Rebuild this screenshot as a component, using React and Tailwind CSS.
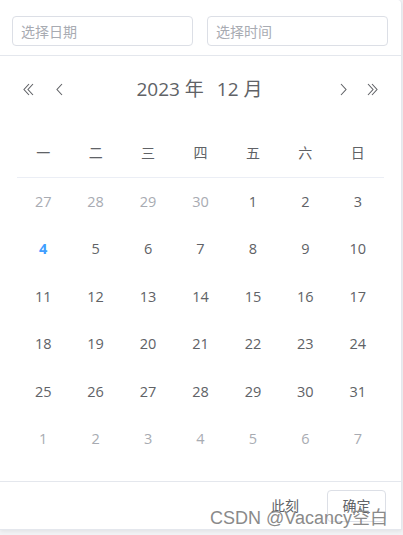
import React from "react";

const weekDays = ["一", "二", "三", "四", "五", "六", "日"];

// december 2023, monday first
const rows = [
  [27, 28, 29, 30, 1, 2, 3],
  [4, 5, 6, 7, 8, 9, 10],
  [11, 12, 13, 14, 15, 16, 17],
  [18, 19, 20, 21, 22, 23, 24],
  [25, 26, 27, 28, 29, 30, 31],
  [1, 2, 3, 4, 5, 6, 7],
];

const Chevron = ({ dir = "left", double = false }) => {
  const pts = dir === "left" ? "6,1 1,6.5 6,12" : "1,1 6,6.5 1,12";
  return (
    <svg width={double ? 11 : 7} height="13" viewBox={double ? "0 0 11 13" : "0 0 7 13"} fill="none">
      <polyline points={pts} stroke="#606266" strokeWidth="1.1" />
      {double && (
        <polyline
          points={dir === "left" ? "10,1 5,6.5 10,12" : "5,1 10,6.5 5,12"}
          stroke="#606266"
          strokeWidth="1.1"
        />
      )}
    </svg>
  );
};

const App = () => {
  return (
    <div
      className="w-[403px] h-[535px] bg-[#f2f3f5] overflow-hidden"
      style={{ fontFamily: '"Open Sans", "Noto Sans CJK SC", sans-serif' }}
    >
      <div className="relative w-[402px] h-[530px] bg-white border-r border-b border-[#e4e7ed] rounded-tr-[4px] shadow-[0_1px_4px_rgba(0,0,0,0.08)]">
        {/* inputs */}
        <div className="flex gap-[14px] px-[12px] pt-[16px] h-[56px] border-b border-[#e4e7ed]">
          <div className="w-[181px] h-[30px] border border-[#dcdfe6] rounded-[4px] flex items-center px-[8px] text-[14px] text-[#a8abb2]">
            选择日期
          </div>
          <div className="w-[181px] h-[30px] border border-[#dcdfe6] rounded-[4px] flex items-center px-[8px] text-[14px] text-[#a8abb2]">
            选择时间
          </div>
        </div>

        <div className="px-[17px] pt-[11px]">
          {/* header */}
          <div className="flex items-center justify-between h-[44px] mb-[18px]">
            <div className="flex gap-[9px]">
              <span className="w-[22px] flex justify-center"><Chevron dir="left" double /></span>
              <span className="w-[22px] flex justify-center"><Chevron dir="left" /></span>
            </div>
            <div className="flex gap-[13px] text-[19px] text-[#606266] pr-[4px]">
              <span>2023 年</span>
              <span>12 月</span>
            </div>
            <div className="flex gap-[7px]">
              <span className="w-[22px] flex justify-center"><Chevron dir="right" /></span>
              <span className="w-[22px] flex justify-center"><Chevron dir="right" double /></span>
            </div>
          </div>

          {/* weekdays */}
          <div className="grid grid-cols-7 h-[49px] border-b border-[#ebeef5] items-center">
            {weekDays.map((d) => (
              <div key={d} className="text-center text-[14px] text-[#606266] pb-[2px]">{d}</div>
            ))}
          </div>

          {/* days */}
          <div className="pb-[19px]">
            {rows.map((row, i) => (
              <div key={i} className="grid grid-cols-7 h-[47.5px] items-center">
                {row.map((d, j) => {
                  const other = (i === 0 && d > 20) || i === 5;
                  const today = i === 1 && d === 4;
                  return (
                    <div
                      key={j}
                      className={
                        "text-center text-[14.5px] " +
                        (today ? "text-[#409eff] font-bold" : other ? "text-[#a8abb2]" : "text-[#606266]")
                      }
                    >
                      {d}
                    </div>
                  );
                })}
              </div>
            ))}
          </div>
        </div>

        {/* footer */}
        <div className="absolute left-0 right-0 bottom-0 h-[48px] border-t border-[#e4e7ed] flex items-center justify-end pr-[15px] gap-[14px]">
          <span className="text-[14px] text-[#606266] px-[14px]">此刻</span>
          <span className="w-[59px] h-[32px] border border-[#dcdfe6] rounded-[4px] flex items-center justify-center text-[14px] text-[#606266]">
            确定
          </span>
        </div>

        <div
          className="absolute right-[13px] bottom-[2px] text-[18px] text-[#8a8a8a] leading-none whitespace-nowrap"
          style={{ fontFamily: '"Liberation Sans", "Noto Sans CJK SC", sans-serif' }}
        >
          CSDN @Vacancy空白
        </div>
      </div>
    </div>
  );
};

export default App;
